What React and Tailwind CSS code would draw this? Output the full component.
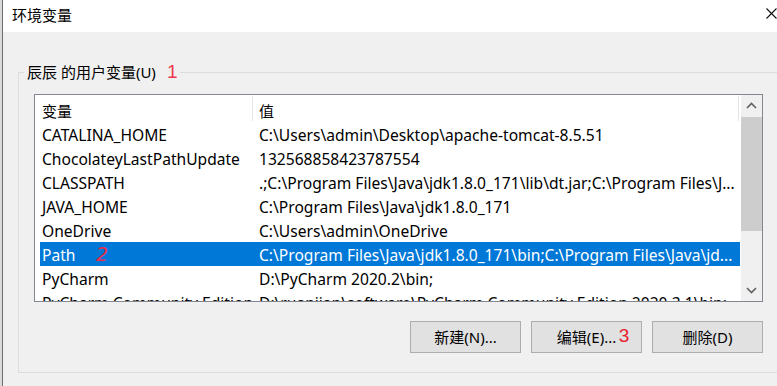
import React from "react";

const rows = [
  ["CATALINA_HOME", "C:\\Users\\admin\\Desktop\\apache-tomcat-8.5.51"],
  ["ChocolateyLastPathUpdate", "132568858423787554"],
  ["CLASSPATH", ".;C:\\Program Files\\Java\\jdk1.8.0_171\\lib\\dt.jar;C:\\Program Files\\J..."],
  ["JAVA_HOME", "C:\\Program Files\\Java\\jdk1.8.0_171"],
  ["OneDrive", "C:\\Users\\admin\\OneDrive"],
  ["Path", "C:\\Program Files\\Java\\jdk1.8.0_171\\bin;C:\\Program Files\\Java\\jd...", true],
  ["PyCharm", "D:\\PyCharm 2020.2\\bin;"],
  ["PyCharm Community Edition", "D:\\ruanjian\\software\\PyCharm Community Edition 2020.3.1\\bin;"],
];

function Chevron({ up }) {
  return (
    <svg width="11" height="7" viewBox="0 0 11 7">
      <path
        d={up ? "M1 6 L5.5 1.5 L10 6" : "M1 1 L5.5 5.5 L10 1"}
        fill="none"
        stroke="#606060"
        strokeWidth="1.6"
      />
    </svg>
  );
}

export default function App() {
  return (
    <div className="w-[777px] h-[386px] overflow-hidden flex bg-[#f0f0f0] text-black font-['Noto_Sans','Noto_Sans_CJK_SC',sans-serif] text-[15px]">
      <div className="w-[2px] h-full bg-[#d9d9d9]" />
      <div className="w-[1px] h-full bg-[#6e6e6e]" />
      <div className="flex-1 flex flex-col min-w-0">
        {/* title bar */}
        <div className="h-[32px] bg-white flex items-center justify-between shrink-0">
          <span className="pl-[9px] leading-[20px] mb-[3px]">环境变量</span>
          <svg width="11" height="11" viewBox="0 0 11 11" className="mb-[5px]">
            <path d="M0.5 0.5 L10.5 10.5 M10.5 0.5 L0.5 10.5" stroke="#111" strokeWidth="1.1" />
          </svg>
        </div>
        {/* body */}
        <div className="flex-1 pl-[15px] pt-[30px]">
          <fieldset className="w-[780px] border border-[#dcdcdc] pt-[12px] pb-[19px]">
            <legend className="ml-[5px] px-[3px] leading-[20px] h-[20px]">
              辰辰 的用户变量(U)
              <span className="ml-[11px] text-[19px] leading-[20px] text-[#ee3a50] font-['Liberation_Sans',sans-serif]">1</span>
            </legend>
            {/* list box */}
            <div className="ml-[15px] w-[729px] h-[208px] border border-[#828790] bg-white flex">
              <div className="w-[706px] h-full overflow-hidden pl-[5px]">
                {/* header */}
                <div className="h-[27px] flex">
                  <div className="w-[212px] pl-[2px] pt-[6px] flex items-center">变量</div>
                  <div className="w-[487px] border-l border-r border-[#e5e5e5] pl-[6px] pt-[5px] flex items-center mt-[1px] mb-[1px]">值</div>
                </div>
                {rows.map(([k, v, sel]) => (
                  <div
                    key={k}
                    className={
                      "relative h-[24px] w-[700px] flex items-center whitespace-nowrap text-[15.6px] pt-[4px] " +
                      (sel ? "bg-[#0078d7] text-white" : "")
                    }
                  >
                    <div className="w-[212px] pl-[2px] overflow-hidden">{k}</div>
                    <div className="flex-1 pl-[7px] overflow-hidden">{v}</div>
                    {sel && (
                      <span className="absolute left-[56px] top-[1px] text-[19px] leading-[22px] italic text-[#ee2a4a] font-['DejaVu_Sans',sans-serif] font-light">
                        2
                      </span>
                    )}
                  </div>
                ))}
              </div>
              {/* scrollbar */}
              <div className="w-[21px] h-full bg-[#f0f0f0] flex flex-col">
                <div className="h-[21px] flex items-center justify-center">
                  <Chevron up />
                </div>
                <div className="mt-[1px] h-[114px] bg-[#cdcdcd]" />
                <div className="flex-1" />
                <div className="h-[21px] flex items-center justify-center">
                  <Chevron />
                </div>
              </div>
            </div>
            {/* buttons */}
            <div className="ml-[15px] w-[729px] mt-[19px] flex justify-end gap-[10px]">
              <button className="w-[111px] h-[32px] bg-[#e1e1e1] border border-[#adadad] flex items-center justify-center">
                新建(N)...
              </button>
              <button className="w-[111px] h-[32px] bg-[#e1e1e1] border border-[#adadad] flex items-center justify-center">
                <span className="relative">
                  编辑(E)...
                  <span className="absolute left-[62px] top-[-2px] text-[19px] leading-[24px] text-[#e8202e] font-['Liberation_Sans',sans-serif]">
                    3
                  </span>
                </span>
              </button>
              <button className="w-[111px] h-[32px] bg-[#e1e1e1] border border-[#adadad] flex items-center justify-center">
                删除(D)
              </button>
            </div>
          </fieldset>
        </div>
      </div>
    </div>
  );
}
